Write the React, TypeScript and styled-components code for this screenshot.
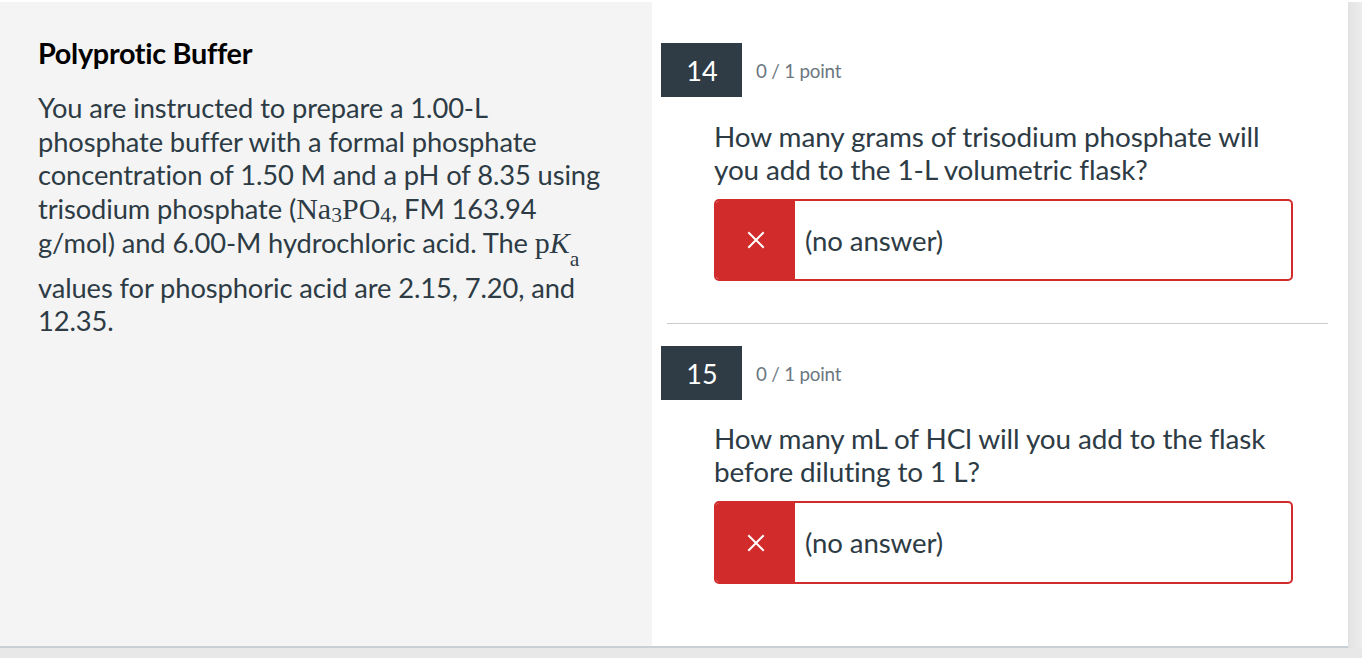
import React from "react";
import styled, { createGlobalStyle } from "styled-components";

const Global = createGlobalStyle`
  html, body { margin: 0; padding: 0; }
  body {
    background: #e9e9e9;
    font-family: Lato, "Open Sans", sans-serif;
    color: #2d3b45;
    -webkit-font-smoothing: antialiased;
  }
`;

const Page = styled.div`
  width: 1362px;
  height: 658px;
  display: flex;
  flex-direction: column;
  background: #e8e8e8;
`;

const TopStrip = styled.div`
  height: 2px;
  background: #ffffff;
`;

const Main = styled.div`
  display: flex;
  height: 646px;
  border-bottom: 2px solid #c9d0d5;
  width: 1348px;
  box-sizing: border-box;
`;

const Rail = styled.div`
  flex: 1;
  background: linear-gradient(to right, #e4e4e4, #ececec);
  border-left: 1px solid #e0e0e0;
`;

const Row = styled.div`
  display: flex;
`;

const Passage = styled.section`
  width: 652px;
  flex: none;
  box-sizing: border-box;
  background: #f4f4f4;
  padding: 36px 22px 0 38px;
`;

const Title = styled.h2`
  margin: 0 0 23px;
  font-size: 28.8px;
  line-height: 30px;
  font-weight: 700;
  color: #000;
  letter-spacing: -0.3px;
`;

const Body = styled.p`
  margin: 0;
  font-size: 27.3px;
  line-height: 33.5px;
  color: #2d3b45;
  max-width: 576px;
  letter-spacing: -0.1px;
`;

const Math = styled.span`
  font-family: "Liberation Serif", "DejaVu Serif", serif;
  font-size: 1.1em;
  letter-spacing: 0;
`;

const Ital = styled.i`
  font-style: italic;
`;

const Sub = styled.span<{ $drop?: string }>`
  display: inline-block;
  font-size: 0.72em;
  line-height: 1;
  vertical-align: ${(p) => p.$drop ?? "-0.15em"};
`;

const Questions = styled.section`
  flex: 1;
  background: #ffffff;
  display: flex;
  flex-direction: column;
  padding-top: 41px;
`;

const Question = styled.article`
  display: flex;
  flex-direction: column;
`;

const Header = styled.div`
  display: flex;
  align-items: center;
  padding-left: 9px;
`;

const Badge = styled.div`
  width: 81px;
  height: 54px;
  background: #2f3b45;
  color: #fff;
  font-size: 27px;
  display: flex;
  align-items: center;
  justify-content: center;
  padding-left: 1px;
  box-sizing: border-box;
`;

const Points = styled.div`
  margin-left: 14px;
  font-size: 18.8px;
  color: #6b7780;
  letter-spacing: -0.2px;
`;

const QBody = styled.div`
  padding: 0 0 0 62px;
  width: 641px;
  box-sizing: border-box;
`;

const QText = styled.p<{ $top: number }>`
  margin: ${(p) => p.$top}px 0 13px;
  font-size: 27.9px;
  line-height: 33px;
  color: #2d3b45;
  letter-spacing: -0.1px;
`;

const Answer = styled.div<{ $h: number }>`
  display: flex;
  width: 579px;
  height: ${(p) => p.$h}px;
  border: 2px solid #d12b2b;
  border-radius: 5px;
  box-sizing: border-box;
  overflow: hidden;
`;

const Mark = styled.div`
  width: 79px;
  flex: none;
  background: #d12b2b;
  display: flex;
  align-items: center;
  justify-content: center;
`;

const AnswerText = styled.div`
  padding-left: 10px;
  display: flex;
  align-items: center;
  font-size: 27.6px;
  color: #2d3b45;
  letter-spacing: -0.1px;
`;

const Divider = styled.hr`
  margin: 42px 20px 22px 15px;
  border: none;
  border-top: 1px solid #c7cdd1;
  height: 0;
`;

const XIcon = () => (
  <svg width="18" height="18" viewBox="0 0 18 18" aria-hidden>
    <path d="M2 2 L16 16 M16 2 L2 16" stroke="#fff" strokeWidth="2" strokeLinecap="square" />
  </svg>
);

type Q = { n: number; text: string; top: number; h: number };

const questions: Q[] = [
  { n: 14, text: "How many grams of trisodium phosphate will you add to the 1-L volumetric flask?", top: 23, h: 82 },
  { n: 15, text: "How many mL of HCl will you add to the flask before diluting to 1 L?", top: 22, h: 83 },
];

export default function App() {
  return (
    <>
      <Global />
      <Page>
        <TopStrip />
        <Row>
          <Main>
            <Passage>
              <Title>Polyprotic Buffer</Title>
              <Body>
                You are instructed to prepare a 1.00-L phosphate buffer with a formal phosphate
                concentration of 1.50 M and a pH of 8.35 using trisodium phosphate (
                <Math>
                  Na<Sub>3</Sub>PO<Sub>4</Sub>
                </Math>
                , FM 163.94 g/mol) and 6.00-M hydrochloric acid. The{" "}
                <Math>
                  p<Ital>K</Ital>
                  <Sub $drop="-0.6em">a</Sub>
                </Math>{" "}
                values for phosphoric acid are 2.15, 7.20, and 12.35.
              </Body>
            </Passage>
            <Questions>
              {questions.map((q, i) => (
                <React.Fragment key={q.n}>
                  {i > 0 && <Divider />}
                  <Question>
                    <Header>
                      <Badge>{q.n}</Badge>
                      <Points>0 / 1 point</Points>
                    </Header>
                    <QBody>
                      <QText $top={q.top}>{q.text}</QText>
                      <Answer $h={q.h}>
                        <Mark>
                          <XIcon />
                        </Mark>
                        <AnswerText>(no answer)</AnswerText>
                      </Answer>
                    </QBody>
                  </Question>
                </React.Fragment>
              ))}
            </Questions>
          </Main>
          <Rail />
        </Row>
      </Page>
    </>
  );
}
